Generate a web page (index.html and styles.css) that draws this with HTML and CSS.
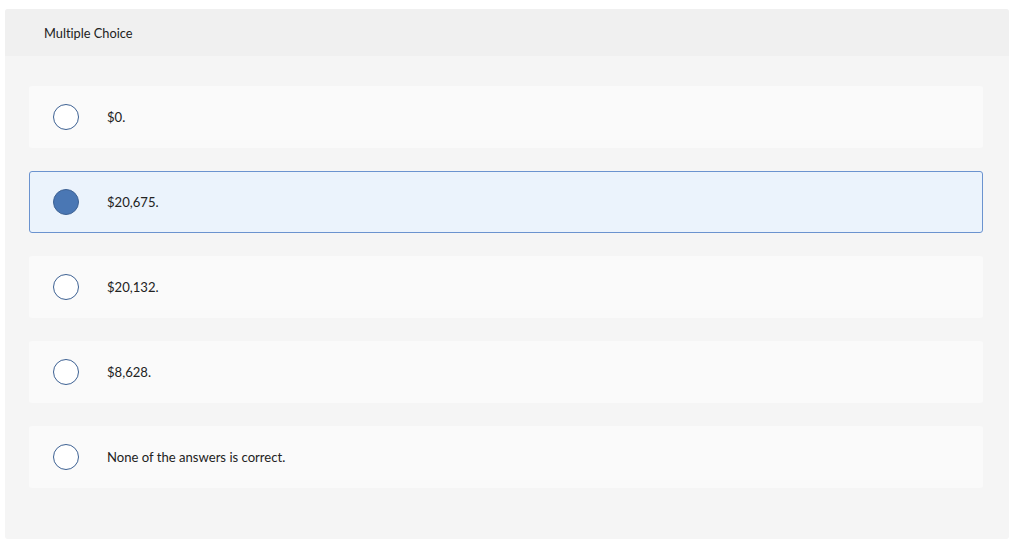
FILE: index.html
```html
<!DOCTYPE html>
<html lang="en">
<head>
    <meta charset="UTF-8">
    <meta name="viewport" content="width=device-width, initial-scale=1.0">
    <title>Multiple Choice</title>
    <link rel="stylesheet" href="styles.css">
</head>
<body>
    <section class="pregunta">
        <header class="pregunta-titulo">Multiple Choice</header>
        <div class="opciones">
            <label class="opcion">
                <span class="radio"></span>
                <span class="texto">$0.</span>
            </label>
            <label class="opcion seleccionada">
                <span class="radio"></span>
                <span class="texto">$20,675.</span>
            </label>
            <label class="opcion">
                <span class="radio"></span>
                <span class="texto">$20,132.</span>
            </label>
            <label class="opcion">
                <span class="radio"></span>
                <span class="texto">$8,628.</span>
            </label>
            <label class="opcion">
                <span class="radio"></span>
                <span class="texto">None of the answers is correct.</span>
            </label>
        </div>
    </section>
</body>
</html>
```

FILE: styles.css
```css
body {
    font-family: 'Lato', 'Liberation Sans', sans-serif;
    font-variant-ligatures: none;
    background-color: #ffffff;
    color: #222222;
    margin: 0;
    padding: 0;
}
.pregunta {
    margin: 9px 15px 0 5px;
    background: #f5f5f5;
    border-radius: 3px;
    overflow: hidden;
}
.pregunta-titulo {
    background: #f0f0f0;
    height: 47px;
    display: flex;
    align-items: center;
    padding-left: 39px;
    font-size: 12.8px;
}
.opciones {
    display: flex;
    flex-direction: column;
    gap: 23px;
    padding: 30px 26px 51px 24px;
}
.opcion {
    display: flex;
    align-items: center;
    height: 62px;
    box-sizing: border-box;
    background: #fafafa;
    border: 1px solid transparent;
    border-radius: 3px;
    font-size: 13.1px;
    cursor: pointer;
}
.radio {
    width: 26px;
    height: 26px;
    box-sizing: border-box;
    border: 1px solid #3d6193;
    border-radius: 50%;
    background: #ffffff;
    margin-left: 23px;
    flex-shrink: 0;
}
.texto {
    margin-left: 28px;
}
.seleccionada {
    background: #ebf3fc;
    border-color: #6b93cf;
}
.seleccionada .radio {
    background: #4a77b4;
    border-color: #3d6193;
}
```
